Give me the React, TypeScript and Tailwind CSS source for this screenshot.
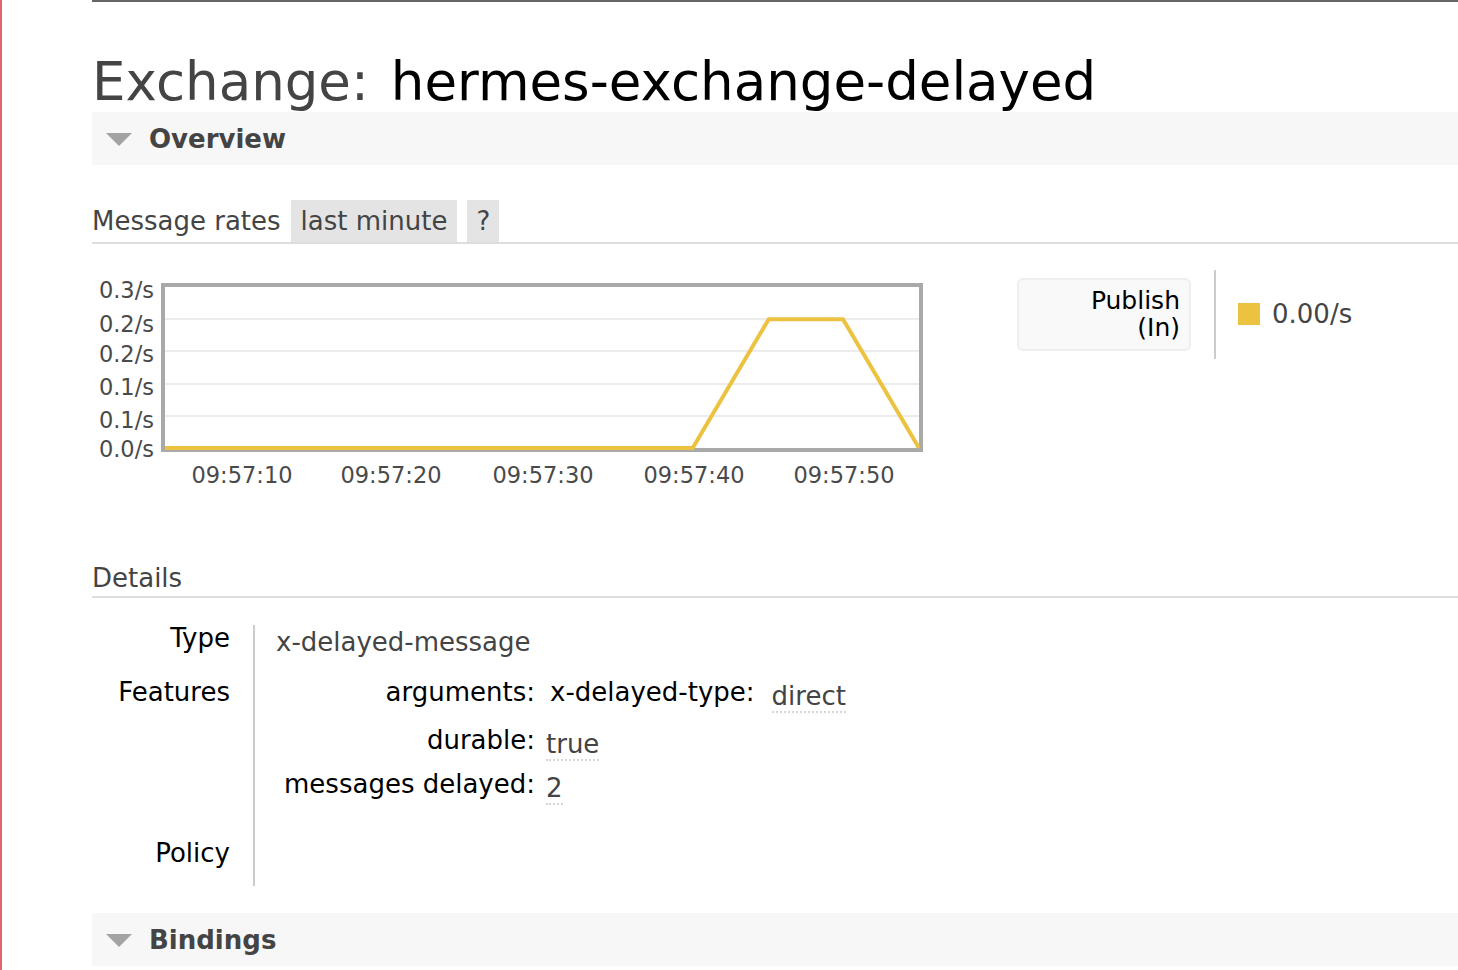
import React from "react";

const yTicks = [
  { label: "0.3/s", y: 298 },
  { label: "0.2/s", y: 332 },
  { label: "0.2/s", y: 362 },
  { label: "0.1/s", y: 395 },
  { label: "0.1/s", y: 428 },
  { label: "0.0/s", y: 457 },
];

const xTicks = [
  { label: "09:57:10", x: 242 },
  { label: "09:57:20", x: 391 },
  { label: "09:57:30", x: 543 },
  { label: "09:57:40", x: 694 },
  { label: "09:57:50", x: 844 },
];

// chart svg starts at page x=92, y=270
const OX = 92;
const OY = 270;

function SectionBar({ title }: { title: string }) {
  return (
    <div className="flex h-[53px] items-center bg-[#f7f7f7] pl-[14px]">
      <svg width="26" height="13" viewBox="0 0 26 13" className="mt-[2px]">
        <polygon points="0,0 26,0 13,13" fill="#a3a3a3" />
      </svg>
      <h2 className="ml-[17px] text-[26px] font-bold leading-[30px] text-[#444]">{title}</h2>
    </div>
  );
}

function RateChart() {
  const grid = [319, 351, 384, 416];
  const line = [
    [165, 448],
    [692.7, 448],
    [768.7, 319.2],
    [843, 319.2],
    [919, 448],
  ]
    .map(([x, y]) => `${x - OX},${y - OY}`)
    .join(" ");

  return (
    <svg width="850" height="230" className="shrink-0">
      {grid.map((y) => (
        <line key={y} x1={165 - OX} x2={921 - OX} y1={y - OY} y2={y - OY} stroke="#ececec" strokeWidth="2" />
      ))}
      <rect x={163 - OX} y={285 - OY} width="758" height="165" fill="none" stroke="#a9a9a9" strokeWidth="4" />
      <polyline points={line} fill="none" stroke="#edc240" strokeWidth="4" strokeLinejoin="round" />
      {yTicks.map((t, i) => (
        <text key={i} x={154 - OX} y={t.y - OY} textAnchor="end" fontSize="22.5" fill="#4a4a4a">
          {t.label}
        </text>
      ))}
      {xTicks.map((t) => (
        <text key={t.label} x={t.x - OX} y={483 - OY} textAnchor="middle" fontSize="22.5" fill="#4a4a4a">
          {t.label}
        </text>
      ))}
    </svg>
  );
}

function Dotted({ children }: { children: React.ReactNode }) {
  return (
    <span className="inline-block border-b-2 border-dotted border-[#d6d6d6] pb-[2px] leading-[26px] text-[#444]">
      {children}
    </span>
  );
}

export default function App() {
  return (
    <div className="h-[970px] overflow-hidden border-l-2 border-[#e0646e] bg-white font-['DejaVu_Sans',Verdana,sans-serif] text-[26px] text-black">
      <div className="ml-[90px]">
        <div className="h-[2px] bg-[#666]" />

        <h1 className="mt-[50px] h-[60px] whitespace-nowrap text-[53px] leading-[60px]">
          <span className="text-[#444]">Exchange:</span>
          <span className="ml-[22px]">hermes-exchange-delayed</span>
        </h1>

        <SectionBar title="Overview" />

        {/* message rates header */}
        <div className="mt-[35px] flex items-end border-b-2 border-[#ddd] text-[#444]">
          <span className="leading-[42px]">Message rates</span>
          <span className="ml-[10px] bg-[#e4e4e4] px-[10px] leading-[42px]">last minute</span>
          <span className="ml-[10px] bg-[#e4e4e4] px-[9px] leading-[42px]">?</span>
        </div>

        <div className="mt-[26px] flex items-start">
          <RateChart />
          <div className="ml-[75px] mt-[8px] w-[174px] rounded-[6px] border-2 border-[#eee] bg-[#f9f9f9] pb-[8px] pr-[9px] pt-[7px] text-right text-[25px] leading-[27px] text-black">
            <div>Publish</div>
            <div>(In)</div>
          </div>
          <div className="ml-[23px] h-[89px] w-[2px] bg-[#ccc]" />
          <div className="ml-[22px] mt-[29px] flex items-center gap-[12px]">
            <div className="h-[22px] w-[22px] bg-[#edc240]" />
            <span className="leading-[30px] text-[#444]">0.00/s</span>
          </div>
        </div>

        {/* details */}
        <div className="mt-[63px] border-b-2 border-[#ddd] pb-[3px] leading-[30px] text-[#444]">Details</div>

        <div className="mt-[27px] grid grid-cols-[161px_1fr] leading-[26px]">
          <div className="pb-[28px] pr-[23px] text-right">Type</div>
          <div className="border-l-2 border-[#ccc] pb-[24px] pl-[21px] pt-[4px] text-[#444]">x-delayed-message</div>

          <div className="pr-[23px] text-right">Features</div>
          <div className="border-l-2 border-[#ccc] pl-[21px]">
            <div className="grid grid-cols-[259px_1fr]">
              <div className="h-[48px] text-right">arguments:</div>
              <div className="h-[48px] pl-[15px]">
                <span>x-delayed-type:</span>
                <span className="relative top-[4px] ml-[17px]">
                  <Dotted>direct</Dotted>
                </span>
              </div>
              <div className="h-[44px] text-right">durable:</div>
              <div className="h-[44px] pl-[11px]">
                <span className="relative top-[4px]">
                  <Dotted>true</Dotted>
                </span>
              </div>
              <div className="h-[69px] text-right">messages delayed:</div>
              <div className="h-[69px] pl-[11px]">
                <span className="relative top-[4px]">
                  <Dotted>2</Dotted>
                </span>
              </div>
            </div>
          </div>

          <div className="pb-[20px] pr-[23px] text-right">Policy</div>
          <div className="border-l-2 border-[#ccc] pb-[20px] pl-[21px]" />
        </div>

        <div className="mt-[27px]">
          <SectionBar title="Bindings" />
        </div>
      </div>
    </div>
  );
}
